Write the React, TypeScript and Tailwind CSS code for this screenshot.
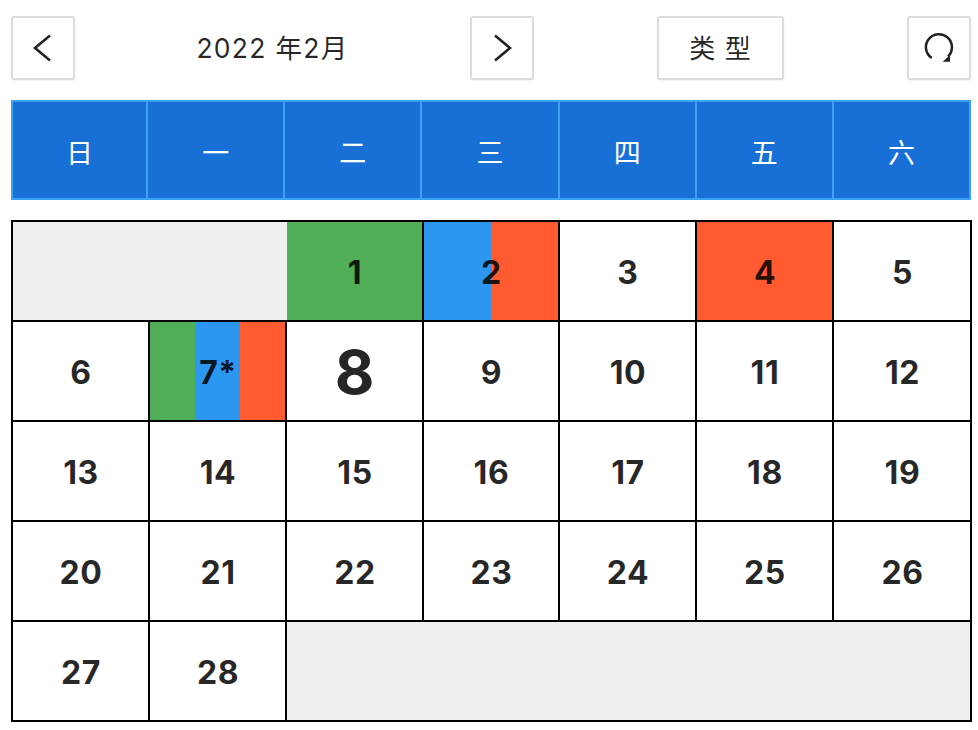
const weekdays = ['日', '一', '二', '三', '四', '五', '六'];

type Day = { label: string; stripes?: string[]; big?: boolean };

const GREEN = 'bg-[#4fae56]';
const BLUE = 'bg-[#2c97f0]';
const ORANGE = 'bg-[#ff5a30]';

const days: Day[] = [
  { label: '1', stripes: [GREEN] },
  { label: '2', stripes: [BLUE, ORANGE] },
  { label: '3' },
  { label: '4', stripes: [ORANGE] },
  { label: '5' },
  { label: '6' },
  { label: '7*', stripes: [GREEN, BLUE, ORANGE] },
  { label: '8', big: true },
  ...Array.from({ length: 20 }, (_, i) => ({ label: String(i + 9) })),
];

function NavButton({ className, children }: { className: string; children: React.ReactNode }) {
  return (
    <button className={`flex h-16 shrink-0 items-center justify-center rounded-[3px] border-2 border-[#dcdcdc] bg-white shadow-[0_1px_2px_rgba(0,0,0,0.06)] ${className}`}>
      {children}
    </button>
  );
}

function Chevron({ flip }: { flip?: boolean }) {
  return (
    <svg width="20" height="28" viewBox="0 0 20 28" fill="none" stroke="#222" strokeWidth="2.6" className={flip ? 'ml-0.5 rotate-180' : 'mr-0.5'}>
      <path d="M18 1.5 L3 14 L18 26.5" />
    </svg>
  );
}

function Refresh() {
  return (
    <svg width="32" height="32" viewBox="0 0 32 32" fill="none">
      <path d="M8.7 26 A13 13 0 1 1 25 24.5" stroke="#222" strokeWidth="2.5" />
      <path d="M19.7 29.7 L27 23 L27 29.7 Z" fill="#222" />
    </svg>
  );
}

function DayCell({ day }: { day: Day }) {
  return (
    <div className="relative flex h-[100px] items-center justify-center border-r-2 border-b-2 border-black">
      {day.stripes && (
        <div className="absolute inset-0 flex">
          {day.stripes.map((s, i) => (
            <div key={i} className={`flex-1 ${s}`} />
          ))}
        </div>
      )}
      <span className={`relative pt-1 pl-px font-bold tracking-[0.6px] text-black/85 ${day.big ? 'text-[61px]' : 'text-[32px]'}`}>{day.label}</span>
    </div>
  );
}

export default function App() {
  return (
    <div className="h-[730px] w-[978px] bg-white pt-4 pl-[11px] font-['Inter','Noto_Sans_CJK_SC',sans-serif] text-black/85">
      <div className="flex h-16 w-[960px] items-center">
        <NavButton className="w-16">
          <Chevron />
        </NavButton>
        <div className="w-[395px] pt-0.5 text-center text-[26.5px] tracking-[1.3px]">2022 年2月</div>
        <NavButton className="w-16">
          <Chevron flip />
        </NavButton>
        <div className="w-[123px]" />
        <NavButton className="w-[127px] text-[26px] tracking-[1px]">类 型</NavButton>
        <div className="w-[123px]" />
        <NavButton className="w-16">
          <Refresh />
        </NavButton>
      </div>

      <div className="mt-5 grid h-[100px] w-[960px] grid-cols-7">
        {weekdays.map((d) => (
          <div key={d} className="flex items-center justify-center border-y-2 border-r-2 border-[#3da1f5] bg-[#1870d6] pt-2 text-[27px] text-white first:border-l-2">
            {d}
          </div>
        ))}
      </div>

      <div className="mt-5 grid w-[961px] grid-cols-[137px_137px_137px_136px_137px_137px_138px] border-t-2 border-l-2 border-black">
        <div className="col-span-2 h-[100px] border-b-2 border-black bg-[#efefef]" />
        {days.map((day) => (
          <DayCell key={day.label} day={day} />
        ))}
        <div className="col-span-5 h-[100px] border-r-2 border-b-2 border-black bg-[#efefef]" />
      </div>
    </div>
  );
}
